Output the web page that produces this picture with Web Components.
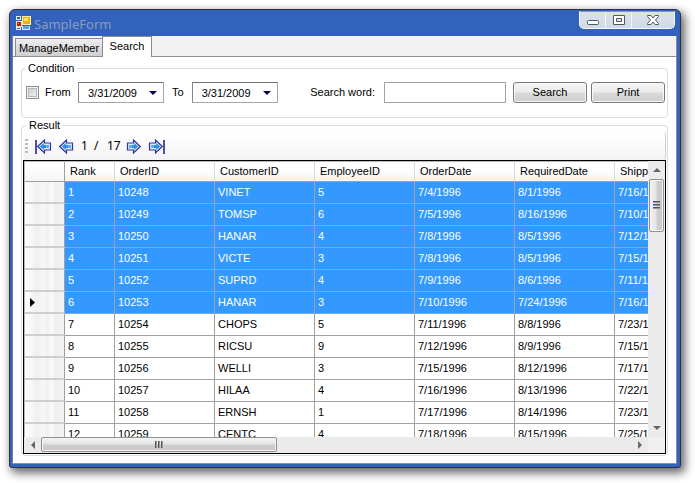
<!DOCTYPE html>
<html lang="en">
<head>
<meta charset="utf-8">
<title>SampleForm</title>
<style>
  body { margin: 0; background: #fff; color: #000; font: 11px/13px "Liberation Sans", Arial, sans-serif; }
  sample-app { height: 100vh; }
</style>
</head>
<body>
<sample-app></sample-app>
<script>
const define = (name, html, setup) => customElements.define(name, class extends HTMLElement {
  constructor() {
    super();
    const root = this.attachShadow({ mode: 'open' });
    root.innerHTML = '<style>*{box-sizing:border-box}button,input,select{font:inherit;color:inherit;margin:0}</style>' + html;
    this.root = root;
  }
  connectedCallback() { if (setup) setup(this, this.root); }
});

define('app-logo', `
<style>:host{display:block;width:15px;height:15px}svg{display:block}</style>
<svg width="15" height="15" viewBox="0 0 15 15">
  <path d="M0 0h5v4H0zM0 11h5v3H0zM6 10h8v4H6z" fill="#e6ecf5"/>
  <path d="M1 1h3v2H1zM1 12h3v1H1z" fill="#345f9f"/>
  <rect x="6" y="0" width="9" height="9" fill="#fff2a8"/><rect x="7" y="1" width="7" height="7" fill="#eeb210"/>
  <path d="M8 2h4v3H8z" fill="#ffe36b"/>
  <rect x="0" y="5" width="6" height="6" fill="#f6d8d4"/><rect x="1" y="6" width="4" height="4" fill="#b91e16"/>
  <path d="M2 7h1v1H2z" fill="#e88"/>
  <rect x="7" y="10" width="6" height="3" fill="#5da0ee"/>
</svg>`);

define('caption-buttons', `
<style>
  :host{display:flex;height:18px;border:1px solid #f4f8fd;border-top:1px solid #7f95c4;border-radius:0 0 5px 5px;overflow:hidden;background:#d6deea}
  button{border:0;padding:0;background:linear-gradient(#dbe2ee,#d2dae7);width:26px;display:grid;place-items:center;border-right:1px solid #f4f8fd}
  button:last-child{width:42px;border-right:0}
  svg{display:block}
</style>
<button aria-label="Minimize"><svg width="14" height="16"><rect x="1.500" y="8.500" width="11" height="4" rx="1" fill="#fff" stroke="#535666"/></svg></button>
<button aria-label="Maximize"><svg width="14" height="16"><path fill-rule="evenodd" d="M1.500 3.500h11v9h-11zM4.500 6.500v3h5v-3z" fill="#fff" stroke="#535666"/></svg></button>
<button aria-label="Close"><svg width="14" height="16"><path d="M1.500 3.500h3.500l2 2.500 2-2.500h3.500v1L9.500 8l3 3.500v1H9l-2-2.500-2 2.500H1.500v-1l3-3.500-3-3.500z" fill="#fff" stroke="#535666"/></svg></button>`);

define('app-window', `
<style>
  :host{flex:1;min-width:0;display:flex;flex-direction:column;background:#3262bc;border:1px solid #2b3340;border-radius:6px 6px 3px 3px;padding:0 3px 3px;box-shadow:3px 4px 10px 1px rgba(0,0,0,.6)}
  header{display:flex;height:26px;padding-left:3px;align-items:flex-start}
  app-logo{margin-top:6px}
  h1{flex:1;margin:5px 0 0 3px;font:13px/18px "Noto Sans",sans-serif;color:#8b9bbe}
  caption-buttons{margin:1px 2px 0 0}
  main{flex:1;min-height:0;display:flex;flex-direction:column;background:#f2f2f2;border:1px solid #8c8e98;border-top:0;border-left-color:#777d99;margin:0 0 0 -1px}
</style>
<header><app-logo></app-logo><h1><slot name="title"></slot></h1><caption-buttons></caption-buttons></header>
<main><slot></slot></main>`);

define('tab-strip', `
<style>
  :host{display:flex;height:21px;align-items:flex-end;padding-left:2px;box-shadow:inset 0 -1px #8c8c96}
  button{border:1px solid #8c8c96;padding:0;height:19px;white-space:nowrap}
  .idle{width:87px;background:linear-gradient(#efefef,#ddd 50%,#cfcfcf);border-right:0;padding-top:1px}
  .active{width:50px;height:21px;background:#fff;border-bottom:0;padding-bottom:1px}
</style>
<button class="idle" role="tab" aria-selected="false">ManageMember</button><button class="active" role="tab" aria-selected="true">Search</button>`);

define('group-box', `
<style>
  :host{display:flex;min-width:0}
  fieldset{flex:1;min-width:0;margin:0;padding:0;border:1px solid #d5dfe6;border-radius:4px;display:flex;flex-direction:column}
  legend{margin-left:3px;padding:0 3px;height:13px}
  :host([fill]){min-height:0}
  :host([fill]) fieldset{min-height:0;padding:0 1px 1px 1px}
</style>
<fieldset><legend><slot name="legend"></slot></legend><slot></slot></fieldset>`);

define('date-choice', `
<style>
  :host{display:grid;width:86px;height:21px}
  select,svg{grid-area:1/1}
  select{appearance:none;width:100%;height:21px;background:#fff;border:1px solid #a4a8ae;border-top-color:#6e7177;border-left-color:#85888e;border-radius:0;padding:1px 0 0 9px}
  svg{justify-self:end;align-self:center;margin-right:7px;pointer-events:none}
</style>
<select><option></option></select>
<svg width="8" height="4"><path d="M0 0h8L4 4z" fill="#000050"/></svg>`, (el, r) => {
  r.querySelector('option').textContent = el.getAttribute('value');
  r.querySelector('select').setAttribute('aria-label', el.getAttribute('label'));
});

define('push-button', `
<style>
  :host{display:block;width:74px}
  button{width:100%;height:21px;padding:0;border:1px solid #77797c;border-radius:3px;background:linear-gradient(#f4f4f4,#ebebeb 48%,#d9d9d9 52%,#d0d0d0);box-shadow:inset 0 0 0 1px #f9f9f9}
</style>
<button><slot></slot></button>`);

define('condition-form', `
<style>
  :host{display:flex;align-items:center;padding:7px 2px 14px 4px}
  .check{display:flex;align-items:center;gap:6px;width:52px}
  input[type=checkbox]{appearance:none;width:13px;height:13px;border:1px solid #8e8f8f;background:linear-gradient(135deg,#c5c9ce,#f6f6f6);box-shadow:inset 0 0 0 1px #f4f4f4,inset 0 0 0 2px #b4b8bd}
  .to{padding:0 8px}
  .word{margin-left:auto;padding-right:9px}
  input[type=text]{width:122px;height:21px;border:1px solid #a0a5ad;background:#fff;padding:0 4px;margin-right:7px}
  push-button + push-button{margin-left:4px}
</style>
<label class="check"><input type="checkbox">From</label>
<date-choice label="From date" value="3/31/2009"></date-choice>
<span class="to">To</span>
<date-choice label="To date" value="3/31/2009"></date-choice>
<label class="word" for="w">Search word:</label><input id="w" type="text">
<push-button>Search</push-button><push-button>Print</push-button>`);

const arrow = (flip, bar) => `<svg width="${bar ? 17 : 15}" height="15" viewBox="0 0 ${bar ? 17 : 15} 15"><g transform="${flip ? `translate(${bar ? 17 : 15} 0) scale(-1 1)` : ''}">
  ${bar ? '<path d="M1 1v14" stroke="#15158c" stroke-width="1.500"/>' : ''}<g transform="translate(${bar ? 2 : 0} 0)">
  <path d="M.7 7.500l6.800-6.500v3h6v7h-6v3z" fill="#d9ecff" stroke="#34349c" stroke-width="1.200"/>
  <path d="M2.800 7.500l4-3.500v2h5v3h-5v2z" fill="#2f8fe8"/><path d="M9 6h3v3H9z" fill="#5fb0f5"/></g></g></svg>`;

define('page-bar', `
<style>
  :host{display:flex;height:28px;align-items:center;flex:none;padding-left:2px;background:linear-gradient(#fff,#f3f3f3);border-right:1px solid #d0d0d0;border-radius:0 3px 3px 0;font:12px/14px "Noto Sans",sans-serif}
  i{width:3px;height:15px;margin-right:7px;background:repeating-linear-gradient(#bbb 0 2px,transparent 2px 4px)}
  button{border:0;background:none;padding:0;height:15px;margin-right:7px}
  svg{display:block}
  span{width:13px}
  .total{width:19px}
</style>
<i></i><button aria-label="First">${arrow(0,1)}</button><button aria-label="Previous">${arrow(0,0)}</button>
<span>1</span><span>/</span><span class="total">17</span>
<button aria-label="Next">${arrow(1,0)}</button><button aria-label="Last">${arrow(1,1)}</button>`);

define('scroll-bar', `
<style>
  :host{display:flex;background:#ebebeb}
  :host([vertical]){flex-direction:column}
  button{border:0;padding:0;background:none;display:grid;place-items:center;width:17px;height:18px;flex:none}
  :host(:not([vertical])) button{height:16px}
  .track{flex:1;min-width:0;min-height:0}
  .thumb{display:grid;place-items:center;width:40%;height:15px;border:1px solid #909090;border-radius:2px;background:linear-gradient(#f4f4f4,#e4e4e4 48%,#cfcfcf 52%,#c9c9c9);box-shadow:inset 0 0 0 1px #f4f4f4}
  .thumb b{width:8px;height:7px;background:repeating-linear-gradient(90deg,#555 0 1px,#999 1px 2px,transparent 2px 3px)}
  :host([vertical]) .thumb{width:15px;height:22%;margin-left:1px;background:linear-gradient(90deg,#f4f4f4,#e4e4e4 48%,#cfcfcf 52%,#c9c9c9)}
  :host([vertical]) b{width:7px;height:8px;background:repeating-linear-gradient(#555 0 1px,#999 1px 2px,transparent 2px 3px)}
  svg{display:block}
  :host([vertical]) svg{transform:rotate(90deg)}
</style>
<button aria-label="Scroll back"><svg width="4" height="8"><path d="M4 0v8L0 4z" fill="#666"/></svg></button>
<div class="track"><div class="thumb"><b></b></div></div>
<button aria-label="Scroll forward"><svg width="4" height="8"><path d="M0 0v8l4-4z" fill="#666"/></svg></button>`);

const rows = [
  ['10248','VINET','5','7/4/1996','8/1/1996','7/16/1996'],
  ['10249','TOMSP','6','7/5/1996','8/16/1996','7/10/1996'],
  ['10250','HANAR','4','7/8/1996','8/5/1996','7/12/1996'],
  ['10251','VICTE','3','7/8/1996','8/5/1996','7/15/1996'],
  ['10252','SUPRD','4','7/9/1996','8/6/1996','7/11/1996'],
  ['10253','HANAR','3','7/10/1996','7/24/1996','7/16/1996'],
  ['10254','CHOPS','5','7/11/1996','8/8/1996','7/23/1996'],
  ['10255','RICSU','9','7/12/1996','8/9/1996','7/15/1996'],
  ['10256','WELLI','3','7/15/1996','8/12/1996','7/17/1996'],
  ['10257','HILAA','4','7/16/1996','8/13/1996','7/22/1996'],
  ['10258','ERNSH','1','7/17/1996','8/14/1996','7/23/1996'],
  ['10259','CENTC','4','7/18/1996','8/15/1996','7/25/1996']
];
define('data-grid', `
<style>
  :host{flex:1;min-height:0;display:grid;grid-template:minmax(0,1fr) 16px / minmax(0,1fr) 17px;border:1px solid #000;background:#f0f0f0}
  .view{overflow:hidden;background:#fff;border:1px solid #b8b8b8;border-width:1px 0 0 1px}
  table{border-collapse:separate;border-spacing:0;table-layout:fixed;width:740px}
  th,td{height:22px;padding:0 0 0 3px;text-align:left;font-weight:400;white-space:nowrap;border-right:1px solid #a0a0a0;border-bottom:1px solid #a0a0a0;line-height:13px}
  thead th{height:20px;padding-left:5px;background:linear-gradient(#fff,#fff 40%,#f3f3f3);border-right-color:#d9d9d9}
  thead td{height:20px;background:linear-gradient(#fff 5px,#f4f4f4)}
  tbody th{padding:0 0 0 5px;border-bottom:2px solid #cfcfcf;background:linear-gradient(90deg,#fff,#f0f0f0 12px,#f8f8f8 19px,#efefef 21px,#fafafa 28px,#eee 30px,#f4f4f4)}
  .sel td{background:#3399ff;color:#fff}
  svg{display:block}
</style>
<div class="view"><table>
<colgroup><col style="width:40px"><col style="width:50px"><col span="5" style="width:100px"><col style="width:150px"></colgroup>
<thead><tr><td></td>${['Rank','OrderID','CustomerID','EmployeeID','OrderDate','RequiredDate','ShippedDate'].map(h => `<th scope="col">${h}</th>`).join('')}</tr></thead>
<tbody>${rows.map((r, i) => `<tr class="${i < 6 ? 'sel' : ''}"><th>${i === 5 ? '<svg width="5" height="9"><path d="M0 0l5 4.500L0 9z"/></svg>' : ''}</th><td>${i + 1}</td>${r.map(c => `<td>${c}</td>`).join('')}</tr>`).join('')}</tbody>
</table></div>
<scroll-bar vertical></scroll-bar><scroll-bar></scroll-bar>`);

define('sample-app', `
<style>
  :host{display:flex;padding:9px 14px 15px 9px;box-sizing:border-box;overflow:hidden}
  section{flex:1;min-height:0;display:flex;flex-direction:column;gap:1px;background:#fff;padding:5px 8px 7px}
  tab-strip{flex:none}
  group-box[fill]{flex:1}
</style>
<app-window><span slot="title">SampleForm</span>
  <tab-strip role="tablist"></tab-strip>
  <section>
    <group-box><span slot="legend">Condition</span><condition-form></condition-form></group-box>
    <group-box fill><span slot="legend">Result</span><page-bar></page-bar><data-grid></data-grid></group-box>
  </section>
</app-window>`);
</script>
</body>
</html>
